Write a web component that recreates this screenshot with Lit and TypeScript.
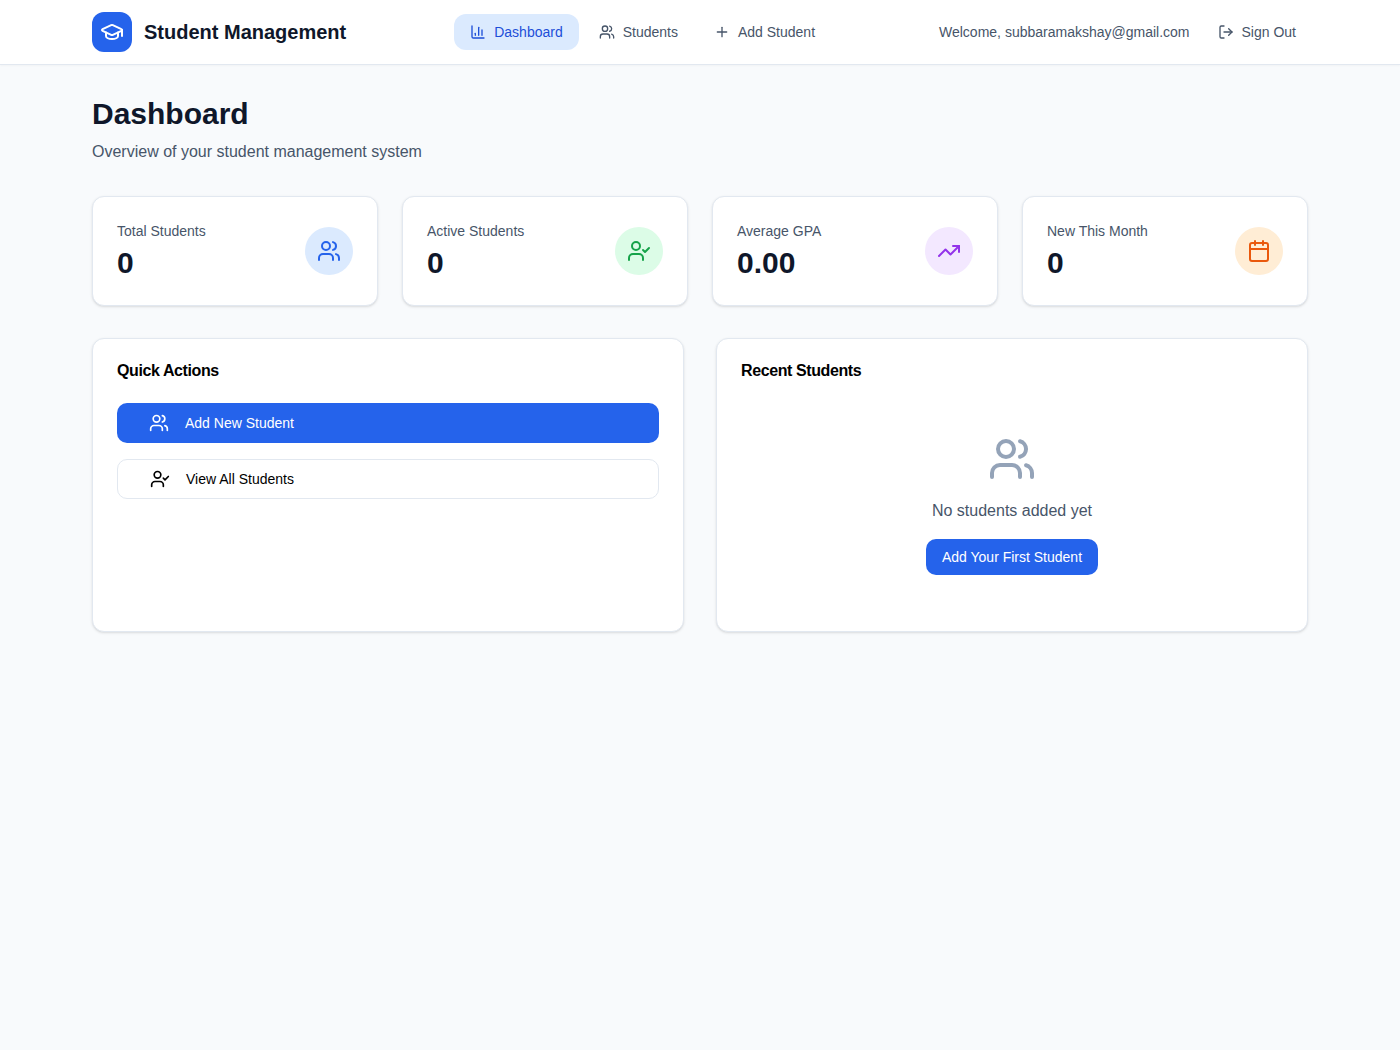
import { LitElement, html, css, svg } from "lit";
import { customElement } from "lit/decorators.js";

const paths: Record<string, unknown> = {
  cap: svg`<path d="M21.42 10.922a1 1 0 0 0-.019-1.838L12.83 5.18a2 2 0 0 0-1.66 0L2.6 9.08a1 1 0 0 0 0 1.832l8.57 3.908a2 2 0 0 0 1.66 0z"/><path d="M22 10v6"/><path d="M6 12.5V16a6 3 0 0 0 12 0v-3.5"/>`,
  users: svg`<path d="M16 21v-2a4 4 0 0 0-4-4H6a4 4 0 0 0-4 4v2"/><circle cx="9" cy="7" r="4"/><path d="M22 21v-2a4 4 0 0 0-3-3.87"/><path d="M16 3.13a4 4 0 0 1 0 7.75"/>`,
  check: svg`<path d="M16 21v-2a4 4 0 0 0-4-4H6a4 4 0 0 0-4 4v2"/><circle cx="9" cy="7" r="4"/><polyline points="16 11 18 13 22 9"/>`,
  trend: svg`<polyline points="22 7 13.5 15.5 8.5 10.5 2 17"/><polyline points="16 7 22 7 22 13"/>`,
  cal: svg`<path d="M8 2v4"/><path d="M16 2v4"/><rect x="3" y="4" width="18" height="18" rx="2"/><path d="M3 10h18"/>`,
  chart: svg`<path d="M3 3v16a2 2 0 0 0 2 2h16"/><path d="M18 17V9"/><path d="M13 17V5"/><path d="M8 17v-3"/>`,
  plus: svg`<path d="M5 12h14"/><path d="M12 5v14"/>`,
  out: svg`<path d="m16 17 5-5-5-5"/><path d="M21 12H9"/><path d="M9 21H5a2 2 0 0 1-2-2V5a2 2 0 0 1 2-2h4"/>`,
};

const icon = (name: string, cls: string) => html`<svg class=${cls} viewBox="0 0 24 24" fill="none" stroke="currentColor" stroke-width="2" stroke-linecap="round" stroke-linejoin="round">${paths[name]}</svg>`;

const stats = [
  { label: "Total Students", value: "0", icon: "users", tone: "blue" },
  { label: "Active Students", value: "0", icon: "check", tone: "green" },
  { label: "Average GPA", value: "0.00", icon: "trend", tone: "purple" },
  { label: "New This Month", value: "0", icon: "cal", tone: "orange" },
];

const nav = [
  { label: "Dashboard", icon: "chart", active: true },
  { label: "Students", icon: "users", active: false },
  { label: "Add Student", icon: "plus", active: false },
];

@customElement("app-root")
export class AppRoot extends LitElement {
  static styles = css`
    :host {
      display: block;
      min-height: 1050px;
      background: #f8fafc;
      font-family: "Liberation Sans", Arial, sans-serif;
      color: #0f172a;
    }
    * { box-sizing: border-box; }
    svg { display: block; flex: none; }
    .i16 { width: 16px; height: 16px; }
    .i20 { width: 20px; height: 20px; }
    .i24 { width: 24px; height: 24px; }
    .i48 { width: 48px; height: 48px; }
    header {
      height: 65px;
      background: #fff;
      border-bottom: 1px solid #e2e8f0;
      box-shadow: 0 1px 2px rgba(0, 0, 0, 0.03);
    }
    .bar {
      max-width: 1280px;
      height: 64px;
      margin: 0 auto;
      padding: 0 32px;
      display: flex;
      align-items: center;
      justify-content: space-between;
    }
    .brand { display: flex; align-items: center; gap: 12px; }
    .logo {
      width: 40px;
      height: 40px;
      border-radius: 12px;
      background: #2563eb;
      color: #fff;
      display: flex;
      align-items: center;
      justify-content: center;
    }
    .brand-name { font-size: 20px; line-height: 28px; font-weight: 700; color: #0f172a; }
    nav { display: flex; gap: 4px; }
    .link {
      height: 36px;
      padding: 0 16px;
      display: flex;
      align-items: center;
      gap: 8px;
      border-radius: 12px;
      font-size: 14px;
      line-height: 20px;
      color: #475569;
    }
    .link.active { background: #dbeafe; color: #1d4ed8; }
    .user { display: flex; align-items: center; gap: 16px; font-size: 14px; line-height: 20px; color: #475569; }
    .link.signout { padding: 0 12px; }
    main {
      max-width: 1280px;
      margin: 0 auto;
      padding: 31px 32px 32px;
    }
    h1 { margin: 0; font-size: 30px; line-height: 36px; font-weight: 700; color: #0f172a; }
    .sub { margin: 8px 0 0; font-size: 16px; line-height: 24px; color: #475569; }
    .stats {
      margin-top: 32px;
      display: grid;
      grid-template-columns: repeat(4, 1fr);
      gap: 24px;
    }
    .card {
      background: #fff;
      border: 1px solid #e2e8f0;
      border-radius: 12px;
      box-shadow: 0 1px 3px rgba(0, 0, 0, 0.1), 0 1px 2px -1px rgba(0, 0, 0, 0.1);
    }
    .stat {
      padding: 24px;
      display: flex;
      align-items: center;
      justify-content: space-between;
    }
    .stat-label { font-size: 14px; line-height: 20px; color: #475569; }
    .stat-value { margin-top: 4px; font-size: 30px; line-height: 36px; font-weight: 700; color: #0f172a; }
    .circle {
      width: 48px;
      height: 48px;
      border-radius: 50%;
      display: flex;
      align-items: center;
      justify-content: center;
    }
    .blue { background: #dbeafe; color: #2563eb; }
    .green { background: #dcfce7; color: #16a34a; }
    .purple { background: #f3e8ff; color: #9333ea; }
    .orange { background: #ffedd5; color: #ea580c; }
    .panels {
      margin-top: 32px;
      display: grid;
      grid-template-columns: repeat(2, 1fr);
      gap: 32px;
    }
    h2 {
      margin: 0;
      padding: 24px;
      font-size: 16px;
      line-height: 16px;
      font-weight: 700;
      color: #000;
      letter-spacing: -0.4px;
    }
    .content { padding: 0 24px 24px; }
    .actions { display: flex; flex-direction: column; gap: 16px; }
    .action {
      height: 40px;
      padding: 0 32px;
      display: flex;
      align-items: center;
      gap: 16px;
      border-radius: 10px;
      font-size: 14px;
      line-height: 20px;
    }
    .action.primary { background: #2563eb; color: #fff; }
    .action.outline { background: #fff; color: #000; border: 1px solid #e2e8f0; }
    .empty {
      padding: 32px 0;
      display: flex;
      flex-direction: column;
      align-items: center;
    }
    .empty svg { color: #94a3b8; }
    .empty p { margin: 16px 0; font-size: 16px; line-height: 24px; color: #475569; }
    .cta {
      height: 36px;
      padding: 0 16px;
      display: flex;
      align-items: center;
      border-radius: 10px;
      background: #2563eb;
      color: #fff;
      font-size: 14px;
      line-height: 20px;
    }
  `;

  render() {
    return html`
      <header>
        <div class="bar">
          <div class="brand">
            <div class="logo">${icon("cap", "i24")}</div>
            <span class="brand-name">Student Management</span>
          </div>
          <nav>
            ${nav.map(
              (n) => html`<div class="link ${n.active ? "active" : ""}">${icon(n.icon, "i16")}<span>${n.label}</span></div>`
            )}
          </nav>
          <div class="user">
            <span>Welcome, subbaramakshay@gmail.com</span>
            <div class="link signout">${icon("out", "i16")}<span>Sign Out</span></div>
          </div>
        </div>
      </header>
      <main>
        <h1>Dashboard</h1>
        <p class="sub">Overview of your student management system</p>
        <section class="stats">
          ${stats.map(
            (s) => html`<div class="card stat">
              <div>
                <div class="stat-label">${s.label}</div>
                <div class="stat-value">${s.value}</div>
              </div>
              <div class="circle ${s.tone}">${icon(s.icon, "i24")}</div>
            </div>`
          )}
        </section>
        <section class="panels">
          <div class="card">
            <h2>Quick Actions</h2>
            <div class="content actions">
              <div class="action primary">${icon("users", "i20")}<span>Add New Student</span></div>
              <div class="action outline">${icon("check", "i20")}<span>View All Students</span></div>
            </div>
          </div>
          <div class="card">
            <h2>Recent Students</h2>
            <div class="content">
              <div class="empty">
                ${icon("users", "i48")}
                <p>No students added yet</p>
                <div class="cta">Add Your First Student</div>
              </div>
            </div>
          </div>
        </section>
      </main>
    `;
  }
}
